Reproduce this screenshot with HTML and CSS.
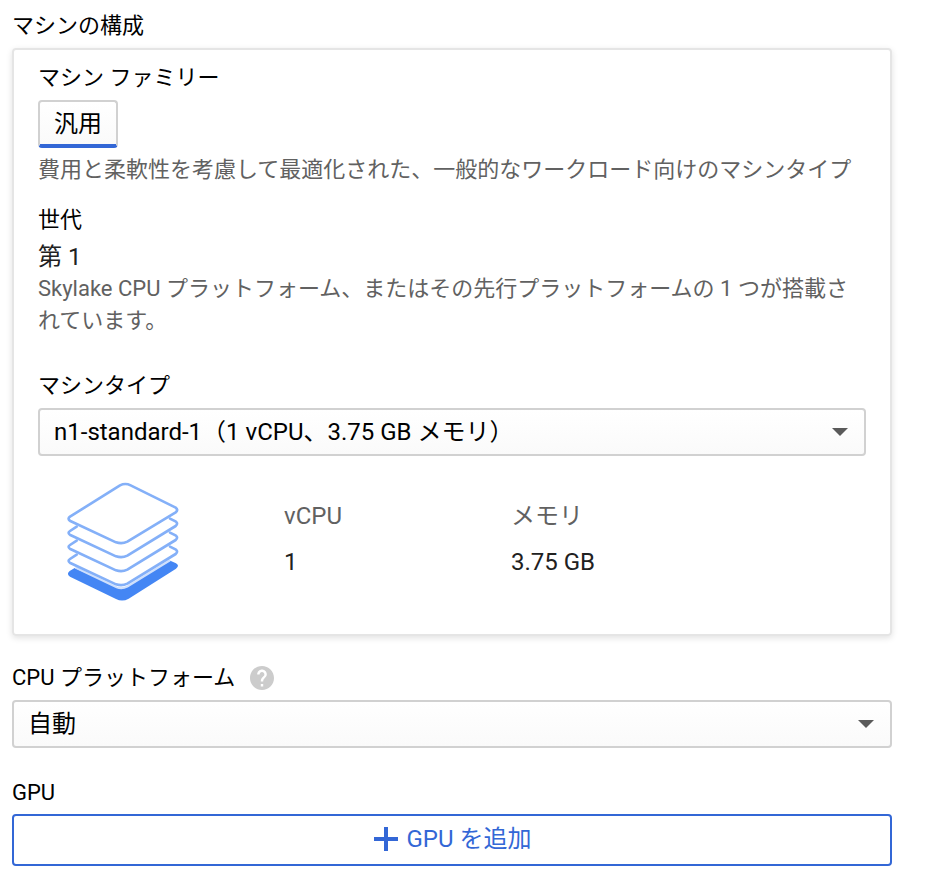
FILE: index.html
```html
<!DOCTYPE html>
<html lang="ja">
<head>
    <meta charset="UTF-8">
    <meta name="viewport" content="width=device-width, initial-scale=1.0">
    <title>マシンの構成</title>
    <link rel="stylesheet" href="styles.css">
</head>
<body>
    <div class="form">
        <div class="label">マシンの構成</div>
        <div class="card">
            <div class="label">マシン ファミリー</div>
            <button class="tab">汎用</button>
            <p class="hint family-hint">費用と柔軟性を考慮して最適化された、一般的なワークロード向けのマシンタイプ</p>

            <div class="label generation">世代</div>
            <div class="value">第 1</div>
            <p class="hint">Skylake CPU プラットフォーム、またはその先行プラットフォームの 1 つが搭載されています。</p>

            <div class="label type">マシンタイプ</div>
            <div class="select type-select">
                <span>n1-standard-1（1 vCPU、3.75 GB メモリ）</span>
                <span class="arrow"></span>
            </div>

            <div class="summary">
                <svg class="stack" viewBox="78 36 342 360">
                    <path class="base" d="M89 303L104 294L232 352Q246 358 260 350L391 272L408 280Q420 287 408 296L266 386Q247 397 228 387L90 320Q78 312 89 303Z"/>
                    <path class="shade" d="M106 293L230 352Q246 358 262 350L390 271"/>
                    <path class="layer" d="M110 254L90 267Q81 273 91 279L228 343Q246 349 262 341L407 252Q415 245 408 239L390 230"/>
                    <path class="layer" d="M110 212L90 225Q81 231 91 237L228 301Q246 307 262 299L407 210Q415 203 408 197L390 188"/>
                    <path class="layer" d="M110 170L90 183Q81 189 91 195L228 259Q246 265 262 257L407 168Q415 161 408 155L390 146"/>
                    <path class="layer" d="M240 46Q256 38 272 46L407 113Q416 120 407 127L262 215Q246 223 228 217L91 153Q81 147 90 140Z"/>
                </svg>
                <div class="spec">
                    <div class="spec-name">vCPU</div>
                    <div class="spec-value">1</div>
                </div>
                <div class="spec">
                    <div class="spec-name">メモリ</div>
                    <div class="spec-value">3.75 GB</div>
                </div>
            </div>
        </div>

        <div class="label platform">
            <span>CPU プラットフォーム</span>
            <svg class="help" viewBox="2 2 20 20">
                <path d="M12 2C6.48 2 2 6.48 2 12s4.480 10 10 10 10-4.480 10-10S17.520 2 12 2zm1 17h-2v-2h2v2zm2.070-7.750l-.9.920C13.450 12.900 13 13.500 13 15h-2v-.5c0-1.100.450-2.100 1.170-2.830l1.240-1.260c.370-.360.590-.860.590-1.410 0-1.100-.9-2-2-2s-2 .9-2 2H8c0-2.210 1.790-4 4-4s4 1.790 4 4c0 .880-.360 1.680-.930 2.250z"/>
            </svg>
        </div>
        <div class="select">
            <span>自動</span>
            <span class="arrow"></span>
        </div>

        <div class="label gpu">GPU</div>
        <button class="add">
            <svg class="plus" viewBox="0 0 24 24"><path d="M10 0h4v10h10v4H14v10h-4V14H0v-4h10z"/></svg>
            <span>GPU を追加</span>
        </button>
    </div>
</body>
</html>
```
FILE: styles.css
```css
* {
    box-sizing: border-box;
}
body {
    margin: 0;
    background-color: #fff;
    color: #000;
    font-family: Roboto, "Noto Sans CJK JP", sans-serif;
    font-size: 22px;
    line-height: 32px;
}
.form {
    width: 880px;
    margin-left: 12px;
    padding-top: 10px;
}
.card {
    height: 588px;
    margin-top: 6px;
    padding: 12px 24px;
    border: 2px solid #e5e5e5;
    border-radius: 4px;
    box-shadow: 0 2px 6px rgba(0, 0, 0, 0.12);
}
button {
    font: inherit;
    cursor: pointer;
}
.tab {
    display: block;
    width: 80px;
    height: 48px;
    margin-top: 6px;
    padding: 1px 0 0;
    font-size: 24px;
    color: #000;
    background: linear-gradient(#fff, #fafafa);
    border: 2px solid #d1d1d1;
    border-bottom: 4px solid #3367d6;
    border-radius: 4px;
}
.hint {
    margin: 0;
    color: #616161;
}
.family-hint {
    margin-top: 6px;
    white-space: nowrap;
}
.generation {
    margin-top: 18px;
}
.value {
    margin-top: 5px;
    font-size: 24px;
    color: #212121;
}
.type {
    margin-top: 33px;
}
.select {
    display: flex;
    align-items: center;
    justify-content: space-between;
    height: 48px;
    margin-top: 6px;
    padding: 0 16px 0 14px;
    font-size: 24px;
    background: linear-gradient(#fff, #fafafa);
    border: 2px solid #d1d1d1;
    border-radius: 4px;
}
.arrow {
    border: 8px solid transparent;
    border-top-color: #5a5a5a;
    border-bottom: 0;
}
.summary {
    display: grid;
    grid-template-columns: 246px 227px 1fr;
    padding-top: 26px;
}
.stack {
    width: 114px;
    height: 120px;
    margin-left: 28px;
}
.layer {
    fill: #fff;
    stroke: #84b0f8;
    stroke-width: 8;
    stroke-linecap: round;
    stroke-linejoin: round;
}
.shade {
    fill: none;
    stroke: #cfe0fc;
    stroke-width: 6;
}
.base {
    fill: #4486f4;
}
.spec {
    padding-top: 18px;
    font-size: 24px;
}
.spec-name {
    color: #616161;
}
.spec-value {
    margin-top: 14px;
    color: #212121;
}
.platform {
    display: flex;
    align-items: center;
    gap: 15px;
    margin-top: 26px;
}
.help {
    width: 24px;
    height: 24px;
    fill: #ccc;
}
.gpu {
    margin-top: 29px;
}
.add {
    display: flex;
    align-items: center;
    justify-content: center;
    gap: 8px;
    width: 100%;
    height: 52px;
    margin-top: 5px;
    padding: 0 0 3px 2px;
    font-size: 24px;
    color: #3367d6;
    background-color: #fff;
    border: 2px solid #3367d6;
    border-radius: 4px;
}
.plus {
    width: 24px;
    height: 24px;
    fill: #3367d6;
}
```
